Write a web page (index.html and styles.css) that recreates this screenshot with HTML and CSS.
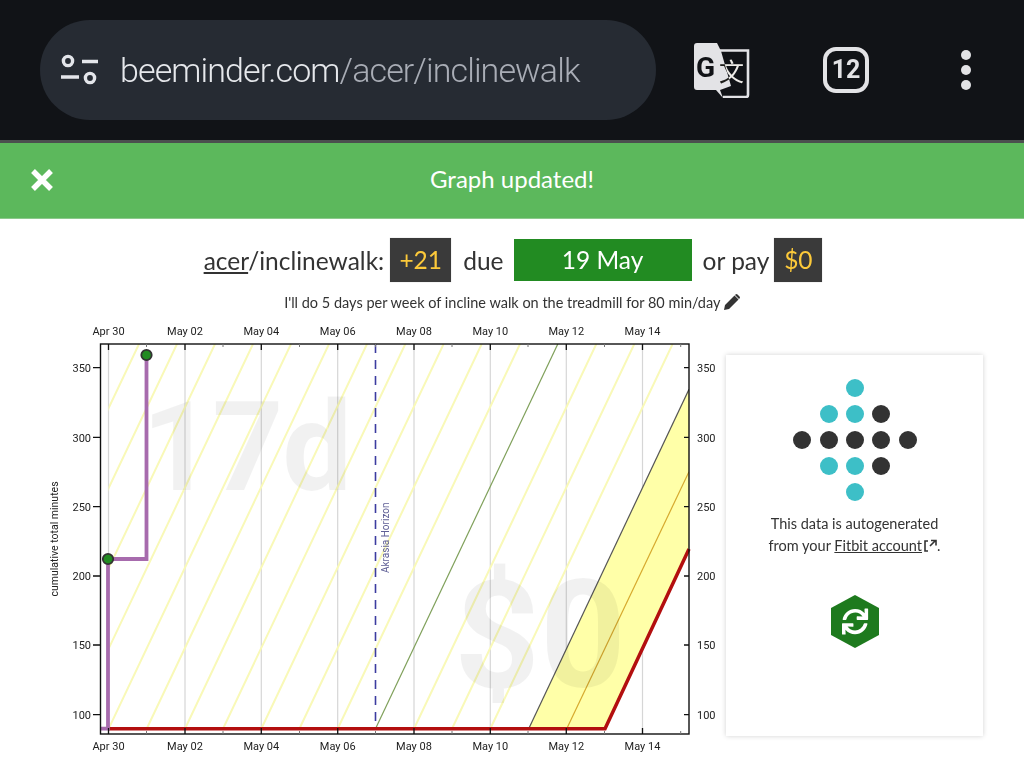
FILE: index.html
```html
<!DOCTYPE html>
<html lang="en">
<head>
  <meta charset="UTF-8">
  <title>acer/inclinewalk</title>
  <meta name="viewport" content="width=device-width, initial-scale=1">
  <link rel="stylesheet" href="styles.css">
</head>
<body>
  <!-- browser chrome -->
  <div class="toolbar">
    <div class="urlbar">
      <svg class="site-icon" width="38" height="32" viewBox="0 0 38 32">
        <g fill="none" stroke="#e3e5ea" stroke-width="3.4">
          <circle cx="7" cy="7" r="4.6"/>
          <path d="M21 7.5h16M0 23h18"/>
          <circle cx="29" cy="24" r="4.6"/>
        </g>
      </svg>
      <span class="url"><span class="url-host">beeminder.com</span>/acer/inclinewalk</span>
    </div>
    <svg class="translate-icon" width="56" height="56" viewBox="0 0 56 56">
      <path d="M26 8.5h28v44.5a2 2 0 0 1-2 2H29" fill="#111317" stroke="#e3e3e6" stroke-width="2.6"/>
      <path d="M3 1h20l4 8 10 35-11 4 3 8-7-8H3a3 3 0 0 1-3-3V4a3 3 0 0 1 3-3z" fill="#e3e3e6"/>
      <text x="2" y="35" class="translate-g">G</text>
      <text x="25" y="39" class="translate-wen">文</text>
    </svg>
    <div class="tab-count">12</div>
    <div class="kebab"><i></i><i></i><i></i></div>
  </div>

  <div class="banner">
    <svg class="close-icon" width="24" height="24" viewBox="0 0 24 24">
      <path d="M3 3l18 18M21 3L3 21" stroke="#fff" stroke-width="5.4" fill="none"/>
    </svg>
    <span>Graph updated!</span>
  </div>

  <div class="summary">
    <span class="slug"><a href="#">acer</a>/inclinewalk:</span>
    <span class="pill">+21</span>
    <span class="due">due</span>
    <span class="pill-date">19 May</span>
    <span class="orpay">or pay</span>
    <span class="pill pill-pay">$0</span>
  </div>

  <p class="goal">I'll do 5 days per week of incline walk on the treadmill for 80 min/day
    <svg class="pencil" width="16" height="16" viewBox="0 0 16 16">
      <path d="M0 16l1-5L10.5 1.500l4 4L5 15zM11.500.5a1.500 1.500 0 0 1 2 0l2 2a1.500 1.500 0 0 1 0 2l-.5.500-4-4z" fill="#333"/>
    </svg>
  </p>

  <div class="graph-row">
    <!-- viewBox uses page coordinates so the numbers read like the plot -->
    <svg class="graph" width="726" height="440" viewBox="0 320 726 440">
      <defs>
        <clipPath id="plot"><rect x="108.500" y="344" width="580.500" height="390"/></clipPath>
      </defs>

      <g stroke="#d6d6d6" stroke-width="1.200">
        <path d="M108.500 344V734M185 344V734M261.300 344V734M337.700 344V734M414 344V734M490.300 344V734M566.300 344V734M642.500 344V734"/>
      </g>

      <polygon points="528.700,728.700 604.300,728.700 689,550 689,389.300" fill="#ffffa8"/>

      <g clip-path="url(#plot)" stroke="#f9f9b8" stroke-width="2">
        <path d="M-43.600 728.700L139 344M-5.500 728.700L177 344M32.600 728.700L215 344M70.700 728.700L253 344M108.600 728.700L291 344M146.700 728.700L329 344M185 728.700L367 344M223 728.700L405.300 344M261.300 728.700L443.600 344M299.400 728.700L481.700 344M337.700 728.700L520 344M414 728.700L596.300 344M452 728.700L634.300 344M490.300 728.700L672.600 344"/>
        <path d="M375.500 728.700L557.800 344" stroke="#7fa05a" stroke-width="1.200"/>
        <path d="M566.700 728.700L689 471.700" stroke="#d6a92e" stroke-width="1.200"/>
        <path d="M528.700 728.700L689 389.300" stroke="#555" stroke-width="1.200"/>
      </g>

      <text x="142" y="490" class="watermark wm-days">17d</text>
      <text x="454" y="687" class="watermark wm-pay">$0</text>

      <path d="M375.500 344V729" stroke="#3c3ca0" stroke-width="1.600" stroke-dasharray="9 7" fill="none"/>
      <text class="horizon" transform="translate(389 573) rotate(-90)">Akrasia Horizon</text>

      <path d="M108 728.700H605L689 549" stroke="#b30f0f" stroke-width="3.500" fill="none"/>
      <path d="M100 728.700H108V559H146.500V355" stroke="#a76bad" stroke-width="3.800" fill="none"/>
      <circle cx="108" cy="559" r="5.200" fill="#228b22" stroke="#333" stroke-width="1.800"/>
      <circle cx="146.500" cy="355" r="5.200" fill="#228b22" stroke="#333" stroke-width="1.800"/>

      <!-- frame and ticks -->
      <rect x="100.500" y="344" width="588.500" height="390" fill="none" stroke="#111" stroke-width="1.400"/>
      <g stroke="#111" stroke-width="1.300">
        <path d="M185 344v6M261.300 344v6M337.700 344v6M414 344v6M490.300 344v6M566.300 344v6M642.500 344v6M108.500 344v6"/>
        <path d="M185 734v-6M261.300 734v-6M337.700 734v-6M414 734v-6M490.300 734v-6M566.300 734v-6M642.500 734v-6M108.500 734v-6"/>
        <path d="M93 367.700h7M93 437.300h7M93 506.700h7M93 576h7M93 645h7M93 714.700h7"/>
        <path d="M684 367.700h5M684 437.300h5M684 506.700h5M684 576h5M684 645h5M684 714.700h5"/>
      </g>
      <g stroke="#777" stroke-width="1">
        <path d="M146.500 344v3M223 344v3M299.500 344v3M375.500 344v3M452 344v3M528 344v3M604.500 344v3M680.700 344v3"/>
        <path d="M146.500 734v-3M223 734v-3M299.500 734v-3M375.500 734v-3M452 734v-3M528 734v-3M604.500 734v-3M680.700 734v-3"/>
      </g>

      <g class="tick-x">
        <text x="108.500" y="335">Apr 30</text><text x="185" y="335">May 02</text><text x="261.300" y="335">May 04</text><text x="337.700" y="335">May 06</text><text x="414" y="335">May 08</text><text x="490.300" y="335">May 10</text><text x="566.300" y="335">May 12</text><text x="642.500" y="335">May 14</text>
        <text x="108.500" y="750">Apr 30</text><text x="185" y="750">May 02</text><text x="261.300" y="750">May 04</text><text x="337.700" y="750">May 06</text><text x="414" y="750">May 08</text><text x="490.300" y="750">May 10</text><text x="566.300" y="750">May 12</text><text x="642.500" y="750">May 14</text>
      </g>
      <g class="tick-yl">
        <text x="91" y="372">350</text><text x="91" y="441.500">300</text><text x="91" y="511">250</text><text x="91" y="580">200</text><text x="91" y="649">150</text><text x="91" y="719">100</text>
      </g>
      <g class="tick-yr">
        <text x="697" y="372">350</text><text x="697" y="441.500">300</text><text x="697" y="511">250</text><text x="697" y="580">200</text><text x="697" y="649">150</text><text x="697" y="719">100</text>
      </g>
      <text class="axis-label" transform="translate(58 539) rotate(-90)">cumulative total minutes</text>
    </svg>

    <div class="card">
      <svg class="fitbit" width="126" height="122" viewBox="0 0 126 122">
        <g fill="#3dbfc7">
          <circle cx="63" cy="9" r="9"/>
          <circle cx="37" cy="35" r="9"/><circle cx="63" cy="35" r="9"/>
          <circle cx="37" cy="87" r="9"/><circle cx="63" cy="87" r="9"/>
          <circle cx="63" cy="113" r="9"/>
        </g>
        <g fill="#333">
          <circle cx="89" cy="35" r="9"/>
          <circle cx="10" cy="61" r="9"/><circle cx="37" cy="61" r="9"/><circle cx="63" cy="61" r="9"/><circle cx="89" cy="61" r="9"/><circle cx="116" cy="61" r="9"/>
          <circle cx="89" cy="87" r="9"/>
        </g>
      </svg>
      <p class="card-text">This data is autogenerated<br>from your <a href="#">Fitbit account<svg class="ext-icon" width="13" height="13" viewBox="0 0 13 13"><path d="M4 2H1v10h3M6 7l5-5M7 1.500h5v5" fill="none" stroke="#333" stroke-width="1.600"/></svg></a>.</p>
      <svg class="refresh" width="48" height="53" viewBox="0 0 48 53">
        <polygon points="24,0 48,13 48,40 24,53 0,40 0,13" fill="#1e7a1e"/>
        <g transform="translate(11 13.500) scale(0.051)">
          <path fill="#fff" d="M440.650 12.570l4 82.770A247.160 247.160 0 0 0 255.830 8C134.730 8 33.910 94.920 12.290 209.820A12 12 0 0 0 24.090 224h49.050a12 12 0 0 0 11.670-9.260 175.910 175.910 0 0 1 317-56.940l-101.460-4.860a12 12 0 0 0-12.570 12v47.410a12 12 0 0 0 12 12H500a12 12 0 0 0 12-12V12a12 12 0 0 0-12-12h-47.370a12 12 0 0 0-11.980 12.570zM255.830 432a175.610 175.610 0 0 1-146-77.800l101.800 4.870a12 12 0 0 0 12.570-12v-47.400a12 12 0 0 0-12-12H12a12 12 0 0 0-12 12V500a12 12 0 0 0 12 12h47.350a12 12 0 0 0 12-12.600l-4.150-82.570A247.170 247.170 0 0 0 255.830 504c121.110 0 221.930-86.920 243.550-201.820a12 12 0 0 0-11.800-14.180h-49.050a12 12 0 0 0-11.670 9.260A175.860 175.860 0 0 1 255.830 432z"/>
        </g>
      </svg>
    </div>
  </div>
</body>
</html>
```

FILE: styles.css
```css
html, body {
  height: 100%;
  margin: 0;
  overflow: hidden;
}

body {
  background: #fff;
  color: #333;
  font-family: Lato, "Open Sans", sans-serif;
}

a {
  color: inherit;
}

/* browser chrome */
.toolbar {
  height: 140px;
  background: #111317;
  border-bottom: 3px solid #4b4f4e;
  box-sizing: content-box;
  display: flex;
  align-items: center;
  padding-left: 40px;
}

.urlbar {
  width: 616px;
  height: 100px;
  border-radius: 50px;
  background: #262b33;
  display: flex;
  align-items: center;
  box-sizing: border-box;
  padding-left: 21px;
}

.site-icon {
  margin-right: 21px;
}

.url {
  font-family: Roboto, sans-serif;
  font-weight: 300;
  font-size: 34px;
  letter-spacing: -0.9px;
  color: #a9adb6;
}

.url-host {
  color: #e6e8ec;
}

.translate-icon {
  margin-left: 38px;
}

.translate-g {
  font-family: Roboto, sans-serif;
  font-weight: 700;
  font-size: 28px;
  fill: #111317;
}

.translate-wen {
  font-family: "Noto Sans CJK SC", sans-serif;
  font-size: 25px;
  fill: #fff;
  mix-blend-mode: difference;
}

.tab-count {
  width: 46px;
  height: 46px;
  box-sizing: border-box;
  margin-left: 73px;
  border: 4px solid #e3e3e6;
  border-radius: 13px;
  color: #e3e3e6;
  font-family: Roboto, sans-serif;
  font-weight: 700;
  font-size: 25px;
  line-height: 38px;
  text-align: center;
}

.kebab {
  margin-left: 92px;
  display: flex;
  flex-direction: column;
  gap: 5px;
}

.kebab i {
  display: block;
  width: 10px;
  height: 10px;
  border-radius: 50%;
  background: #e3e3e6;
}

.banner {
  position: relative;
  height: 76px;
  box-sizing: border-box;
  padding-bottom: 4px;
  background: #5cb85c;
  border-bottom: 1px solid #8cc98c;
  color: #fff;
  font-size: 24px;
  display: flex;
  align-items: center;
  justify-content: center;
}

.close-icon {
  position: absolute;
  left: 30px;
  top: 25px;
}

/* headline */
.summary {
  display: flex;
  align-items: center;
  justify-content: center;
  height: 44px;
  margin-top: 19px;
  padding-left: 2px;
  font-size: 24.500px;
}

.slug {
  margin-right: 6px;
}

.pill {
  height: 44px;
  line-height: 44px;
  width: 61px;
  text-align: center;
  background: #3a3a3a;
  color: #fcc93a;
  box-shadow: 0 0 1px #bbb;
}

.pill-pay {
  width: 48px;
}

.due {
  margin: 0 10px 0 12px;
}

.pill-date {
  width: 178px;
  height: 42px;
  line-height: 42px;
  text-align: center;
  background: #228b22;
  color: #fff;
}

.orpay {
  margin: 0 5px 0 11px;
}

.goal {
  margin: 10px 0 0;
  height: 22px;
  line-height: 22px;
  font-size: 14.500px;
  text-align: center;
}

.pencil {
  vertical-align: -2px;
}

/* graph + side card */
.graph-row {
  display: flex;
  align-items: flex-start;
  margin-top: 6px;
}

.graph {
  display: block;
  flex: none;
}

.graph text {
  font-family: Roboto, sans-serif;
}

.tick-x text {
  font-size: 11px;
  fill: #222;
  text-anchor: middle;
}

.tick-yl text {
  font-size: 11px;
  fill: #222;
  text-anchor: end;
}

.tick-yr text {
  font-size: 11px;
  fill: #222;
}

.axis-label {
  font-size: 10.500px;
  fill: #222;
  text-anchor: middle;
}

.horizon {
  font-size: 10px;
  fill: #5f5f96;
}

.graph .watermark {
  font-weight: 700;
  fill: #000;
  fill-opacity: 0.055;
}

.wm-days {
  font-size: 124px;
  letter-spacing: -1px;
}

.wm-pay {
  font-size: 150px;
}

.card {
  width: 257px;
  height: 381px;
  margin-top: 35px;
  box-sizing: border-box;
  padding-top: 24px;
  background: #fff;
  box-shadow: 0 0 5px rgba(0, 0, 0, 0.18);
  text-align: center;
}

.fitbit {
  display: block;
  margin: 0 auto;
}

.card-text {
  margin: 12px 0 0;
  font-size: 14.500px;
  line-height: 22px;
}

.ext-icon {
  vertical-align: -1px;
  margin-left: 2px;
}

.refresh {
  display: block;
  margin: 38px auto 0;
}
```
